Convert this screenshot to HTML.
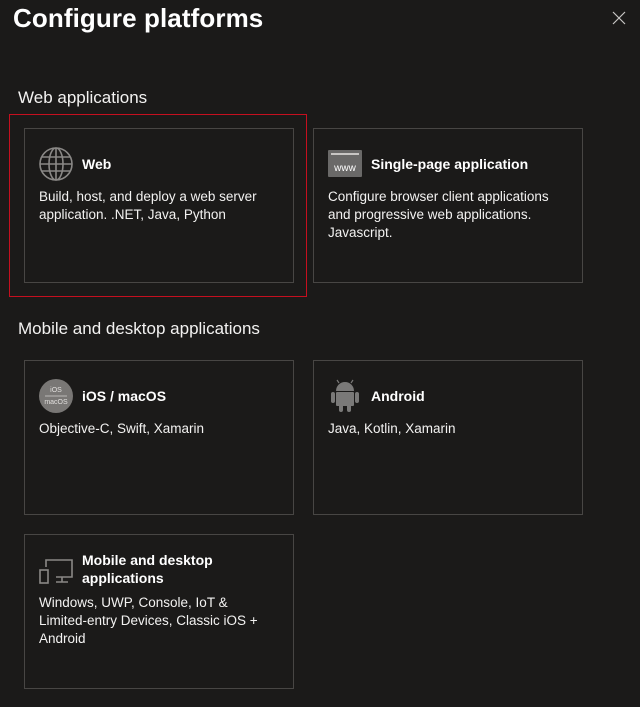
<!DOCTYPE html><html><head><style>
body{margin:0;width:640px;height:707px;background:#1b1a19;font-family:"Liberation Sans",sans-serif;color:#fff;position:relative;overflow:hidden}
.a{position:absolute}
h1{position:absolute;left:13px;top:3px;margin:0;font-size:26px;font-weight:bold;color:#fff;letter-spacing:0.1px}
.h2{position:absolute;left:18px;font-size:17px;color:#f3f2f1}
.card{position:absolute;border:1px solid #484644;box-sizing:border-box;width:270px;height:155px}
.t{position:absolute;left:57px;top:26px;font-size:14px;font-weight:bold;line-height:18px;color:#fff}
.d{position:absolute;left:14px;top:59px;width:245px;font-size:13.5px;line-height:18px;color:#f3f2f1}
.ic{position:absolute;left:14px;top:18px}
</style></head><body>
<h1>Configure platforms</h1>
<svg class="a" style="left:612px;top:11px" width="14" height="14" viewBox="0 0 14 14"><path d="M1 1L13 13M13 1L1 13" stroke="#c8c6c4" stroke-width="1.2"/></svg>
<div class="h2" style="top:88px">Web applications</div>
<div class="a" style="left:9px;top:114px;width:298px;height:183px;border:1px solid #c50f1f;box-sizing:border-box"></div>
<div class="card" style="left:24px;top:128px">
<svg class="ic" width="34" height="34" viewBox="0 0 34 34" fill="none" stroke="#8a8886" stroke-width="1.6"><circle cx="17" cy="17" r="16"/><ellipse cx="17" cy="17" rx="7" ry="16"/><path d="M17 1V33M3 10H31M3 24H31M1 17H33"/></svg>
<div class="t">Web</div>
<div class="d">Build, host, and deploy a web server application. .NET, Java, Python</div></div>
<div class="card" style="left:313px;top:128px">
<svg class="ic" style="top:21px" width="34" height="28" viewBox="0 0 34 28"><rect x="0" y="0" width="34" height="27" rx="1" fill="#6a6968"/><rect x="3" y="3" width="28" height="2" fill="#c8c6c4"/><text x="17" y="21" font-size="10" fill="#fff" text-anchor="middle" font-family="Liberation Sans">www</text></svg>
<div class="t" style="top:26px">Single-page application</div>
<div class="d">Configure browser client applications and progressive web applications. Javascript.</div></div>
<div class="h2" style="top:319px">Mobile and desktop applications</div>
<div class="card" style="left:24px;top:360px">
<svg class="ic" width="34" height="34" viewBox="0 0 34 34"><circle cx="17" cy="17" r="17" fill="#797775"/><path d="M6 17H28" stroke="#d2d0ce" stroke-width="0.8"/><text x="17" y="13" font-size="7" fill="#e1dfdd" text-anchor="middle" font-family="Liberation Sans">iOS</text><text x="17" y="25" font-size="7" fill="#e1dfdd" text-anchor="middle" font-family="Liberation Sans">macOS</text></svg>
<div class="t">iOS / macOS</div>
<div class="d">Objective-C, Swift, Xamarin</div></div>
<div class="card" style="left:313px;top:360px">
<svg class="ic" style="left:16px" width="30" height="34" viewBox="0 0 30 34" fill="#7a7978"><path d="M6 12A9 9 0 0 1 24 12Z"/><path d="M9 4L7 1M21 4L23 1" stroke="#7a7978" stroke-width="1.2"/><rect x="6" y="13" width="18" height="14" rx="1"/><rect x="1" y="13" width="4" height="11" rx="2"/><rect x="25" y="13" width="4" height="11" rx="2"/><rect x="9" y="25" width="4" height="8" rx="2"/><rect x="17" y="25" width="4" height="8" rx="2"/></svg>
<div class="t">Android</div>
<div class="d">Java, Kotlin, Xamarin</div></div>
<div class="card" style="left:24px;top:534px">
<svg class="ic" style="top:23px" width="34" height="26" viewBox="0 0 34 26" fill="none" stroke="#8a8886" stroke-width="1.6"><path d="M7 9V2H33V19H17M23 19V24M17 24H29"/><rect x="1" y="12" width="8" height="13"/></svg>
<div class="t" style="top:16px">Mobile and desktop<br>applications</div>
<div class="d" style="top:59px;width:238px">Windows, UWP, Console, IoT &amp;<br>Limited-entry Devices, Classic iOS +<br>Android</div></div>
</body></html>
